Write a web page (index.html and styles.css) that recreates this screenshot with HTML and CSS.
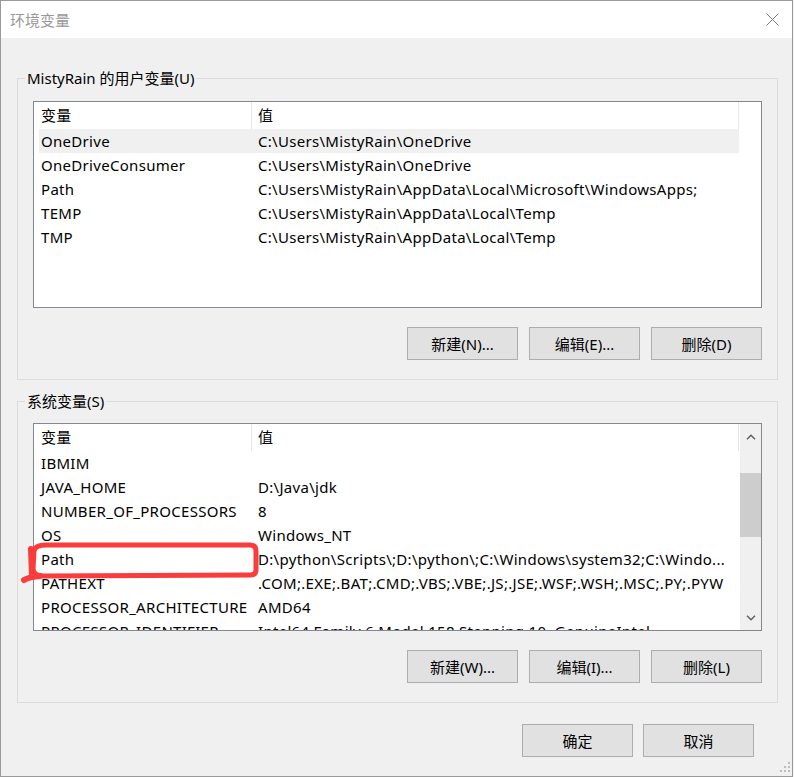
FILE: index.html
```html
<!DOCTYPE html>
<html lang="zh-CN">
<head>
    <meta charset="UTF-8">
    <meta name="viewport" content="width=device-width, initial-scale=1.0">
    <title>环境变量</title>
    <link rel="stylesheet" href="styles.css">
</head>
<body>
    <div class="window">
        <div class="titlebar">
            <span class="title">环境变量</span>
            <svg class="close-btn" width="13" height="13" viewBox="0 0 13 13">
                <path d="M0.5 0.5 L12.5 12.5 M12.5 0.5 L0.5 12.5" stroke="#7a7a7a" stroke-width="1" fill="none"/>
            </svg>
        </div>

        <div class="content">
            <fieldset class="group group-user">
                <legend>MistyRain 的用户变量(U)</legend>
                <div class="list list-user">
                    <div class="list-body">
                        <div class="row head"><span class="col-name">变量</span><span class="col-value">值</span></div>
                        <div class="row hot"><span class="col-name">OneDrive</span><span class="col-value">C:\Users\MistyRain\OneDrive</span></div>
                        <div class="row"><span class="col-name">OneDriveConsumer</span><span class="col-value">C:\Users\MistyRain\OneDrive</span></div>
                        <div class="row"><span class="col-name">Path</span><span class="col-value">C:\Users\MistyRain\AppData\Local\Microsoft\WindowsApps;</span></div>
                        <div class="row"><span class="col-name">TEMP</span><span class="col-value">C:\Users\MistyRain\AppData\Local\Temp</span></div>
                        <div class="row"><span class="col-name">TMP</span><span class="col-value">C:\Users\MistyRain\AppData\Local\Temp</span></div>
                    </div>
                </div>
                <div class="buttons">
                    <button class="btn">新建(N)...</button>
                    <button class="btn">编辑(E)...</button>
                    <button class="btn">删除(D)</button>
                </div>
            </fieldset>

            <fieldset class="group group-system">
                <legend>系统变量(S)</legend>
                <div class="list list-system">
                    <div class="list-body">
                        <div class="row head"><span class="col-name">变量</span><span class="col-value">值</span></div>
                        <div class="row"><span class="col-name">IBMIM</span><span class="col-value"></span></div>
                        <div class="row"><span class="col-name">JAVA_HOME</span><span class="col-value">D:\Java\jdk</span></div>
                        <div class="row"><span class="col-name">NUMBER_OF_PROCESSORS</span><span class="col-value">8</span></div>
                        <div class="row"><span class="col-name">OS</span><span class="col-value">Windows_NT</span></div>
                        <div class="row"><span class="col-name">Path</span><span class="col-value">D:\python\Scripts\;D:\python\;C:\Windows\system32;C:\Windo...</span></div>
                        <div class="row"><span class="col-name">PATHEXT</span><span class="col-value">.COM;.EXE;.BAT;.CMD;.VBS;.VBE;.JS;.JSE;.WSF;.WSH;.MSC;.PY;.PYW</span></div>
                        <div class="row"><span class="col-name">PROCESSOR_ARCHITECTURE</span><span class="col-value">AMD64</span></div>
                        <div class="row"><span class="col-name">PROCESSOR_IDENTIFIER</span><span class="col-value">Intel64 Family 6 Model 158 Stepping 10, GenuineIntel</span></div>
                    </div>
                    <div class="scrollbar">
                        <div class="arrow">
                            <svg width="10" height="6" viewBox="0 0 10 6"><path d="M1 5.2 L5 1.2 L9 5.2" stroke="#606060" stroke-width="1.5" fill="none"/></svg>
                        </div>
                        <div class="thumb"></div>
                        <div class="track"></div>
                        <div class="arrow">
                            <svg width="10" height="6" viewBox="0 0 10 6"><path d="M1 0.8 L5 4.8 L9 0.8" stroke="#606060" stroke-width="1.5" fill="none"/></svg>
                        </div>
                    </div>
                    <!-- red marker drawn around the Path row -->
                    <svg class="mark" width="244" height="46" viewBox="20 538 244 46">
                        <path d="M34 551 Q35 545 46 545 L250 545 Q256 545 256 551 L256 570 Q256 575 250 575 L44 576 Q34 576 33 569 Z" stroke="#fa3c3c" stroke-width="5" fill="none" stroke-linejoin="round"/>
                        <path d="M31 549 L32 575 M40 576 Q29 577 24 580" stroke="#fa3c3c" stroke-width="6" fill="none" stroke-linecap="round"/>
                    </svg>
                </div>
                <div class="buttons">
                    <button class="btn">新建(W)...</button>
                    <button class="btn">编辑(I)...</button>
                    <button class="btn">删除(L)</button>
                </div>
            </fieldset>

            <div class="footer">
                <button class="btn">确定</button>
                <button class="btn">取消</button>
            </div>
        </div>

        <svg class="grip" width="12" height="12" viewBox="0 0 12 12" fill="#bdbdbd">
            <rect x="9" y="0" width="2" height="2"/>
            <rect x="5" y="4" width="2" height="2"/>
            <rect x="9" y="4" width="2" height="2"/>
            <rect x="1" y="8" width="2" height="2"/>
            <rect x="5" y="8" width="2" height="2"/>
            <rect x="9" y="8" width="2" height="2"/>
        </svg>
    </div>
</body>
</html>
```

FILE: styles.css
```css
* {
    box-sizing: border-box;
}

body {
    margin: 0;
    background-color: #f0f0f0;
    font-family: "Noto Sans", "Noto Sans CJK SC", sans-serif;
    font-size: 15px;
    color: #000000;
}

.window {
    position: relative;
    width: 793px;
    height: 777px;
    border: 1px solid #9a9a9a;
    background-color: #f0f0f0;
    display: flex;
    flex-direction: column;
}

.titlebar {
    flex: none;
    height: 37px;
    background-color: #ffffff;
    display: flex;
    align-items: center;
    justify-content: space-between;
    padding: 0 13px 0 9px;
}

.title {
    color: #999999;
    line-height: 20px;
}

.content {
    padding: 30px 14px 0 16px;
}

/* group boxes */
.group {
    margin: 0;
    min-width: 0;
    border: 1px solid #dcdcdc;
    padding: 13px 15px 19px;
}

    .group legend {
        padding: 0 2px;
        margin-left: -8px;
        line-height: 20px;
    }

.group-system {
    margin-top: 11px;
    padding-top: 12px;
}

/* list views */
.list {
    position: relative;
    height: 207px;
    border: 1px solid #828790;
    background-color: #ffffff;
    display: flex;
}

.list-system {
    height: 208px;
}

.list-body {
    flex: 1;
    padding-left: 5px;
    overflow: hidden;
}

.row {
    display: flex;
    width: 700px;
    height: 24px;
    line-height: 24px;
    white-space: nowrap;
    letter-spacing: 0.3px;
}

    .row.head {
        height: 27px;
        line-height: 27px;
    }

    .row.hot {
        background-color: #f0f0f0;
    }

.col-name {
    flex: none;
    width: 213px;
    padding-left: 2px;
}

.col-value {
    flex: 1;
    padding-left: 6px;
    overflow: hidden;
    text-overflow: ellipsis;
}

.head .col-name,
.head .col-value {
    border-right: 1px solid #e5e5e5;
}

/* scrollbar */
.scrollbar {
    flex: none;
    width: 21px;
    margin-left: 1px;
    background-color: #f0f0f0;
    display: flex;
    flex-direction: column;
}

.arrow {
    height: 25px;
    display: flex;
    align-items: center;
    justify-content: center;
}

.thumb {
    height: 64px;
    margin-top: 24px;
    background-color: #cdcdcd;
}

.track {
    flex: 1;
}

.mark {
    position: absolute;
    left: -14px;
    top: 114px;
    pointer-events: none;
}

/* buttons */
.buttons {
    display: flex;
    justify-content: flex-end;
    gap: 11px;
    margin-top: 19px;
}

.footer {
    display: flex;
    justify-content: flex-end;
    gap: 10px;
    margin-top: 21px;
    padding-right: 24px;
}

.btn {
    width: 111px;
    height: 33px;
    padding: 0;
    border: 1px solid #adadad;
    background-color: #e1e1e1;
    font: inherit;
    color: #000000;
}

.grip {
    position: absolute;
    right: 1px;
    bottom: 2px;
}
```
